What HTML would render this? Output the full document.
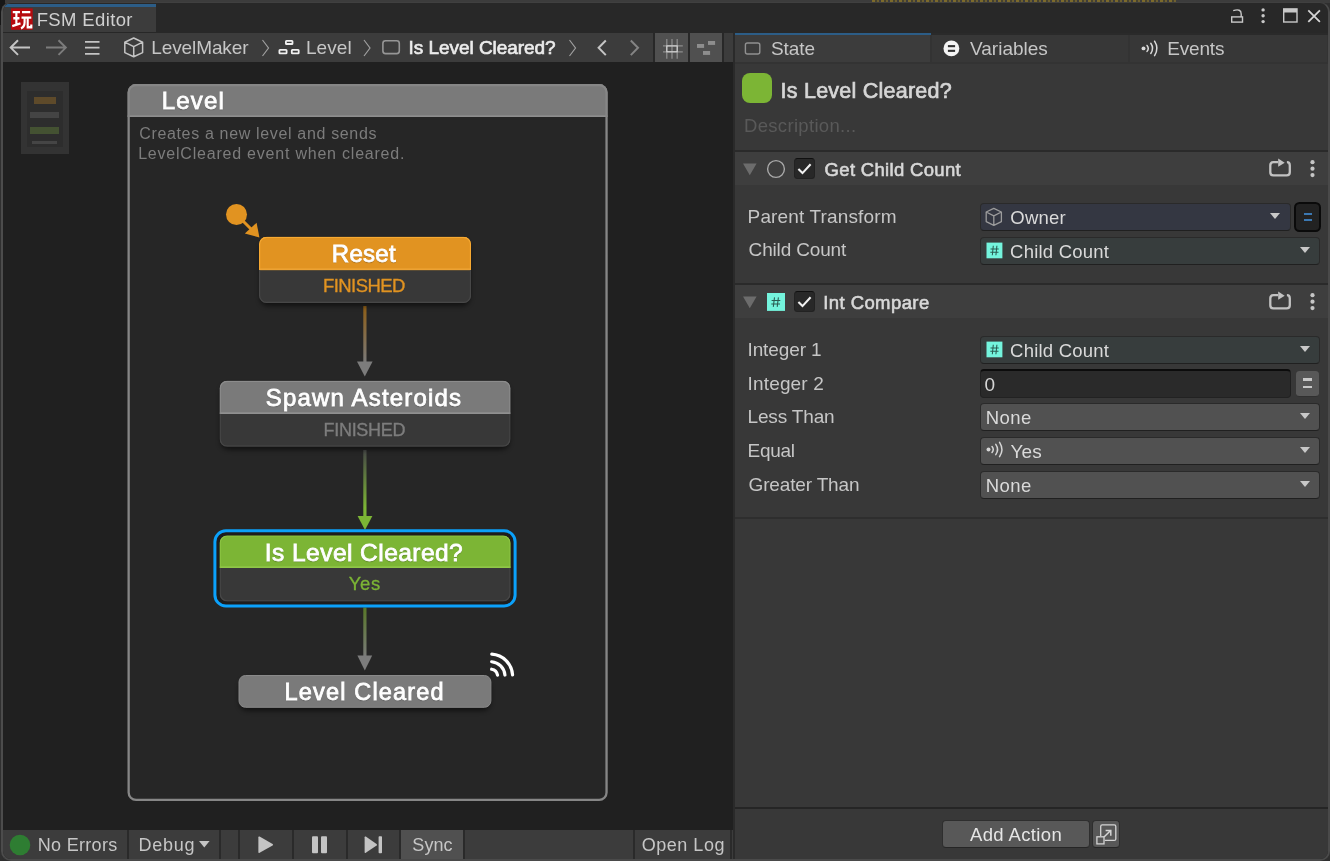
<!DOCTYPE html>
<html><head><meta charset="utf-8">
<style>
*{box-sizing:border-box;margin:0;padding:0}
html,body{width:1330px;height:861px;overflow:hidden;background:#2f2f2f;font-family:"Liberation Sans",sans-serif;}
.a{position:absolute}
#win{position:absolute;left:1px;top:2px;width:1329px;height:859px;border-style:solid;border-width:1px 2px 2px 2px;border-color:#404040 #4a4a4a #4a4a4a #4c4c4c;border-radius:10px;background:#282828;overflow:hidden}
#root{position:absolute;left:-3px;top:-3px;width:1330px;height:861px}
.t{position:absolute;white-space:nowrap}
.bar{background:#3c3c3c}
.sep{position:absolute;top:830px;width:2px;height:29px;background:#2a2a2a}
svg{position:absolute;overflow:visible}
.dd{position:absolute;border-radius:4px;border:1px solid #2a2a2a;border-bottom-color:#202020}
.tri{position:absolute;width:0;height:0;border-left:5.5px solid transparent;border-right:5.5px solid transparent;border-top:6.5px solid #c8c8c8}
.cb{position:absolute;width:21px;height:21px;background:#282828;border:1px solid #222;border-top:1.5px solid #101010;border-radius:3.5px}
.hash{position:absolute;background:#70f3dc}
</style></head><body>
<div class="a" style="left:0;top:0;width:2px;height:861px;background:#303030"></div><div class="a" style="left:0;top:0;width:2px;height:25px;background:#171717"></div><div class="a" style="left:0;top:0;width:1330px;height:3px;background:#3c3c3c"></div><div class="a" style="left:0;top:0;width:5px;height:6px;background:#171717"></div>
<div class="a" style="left:872px;top:0;width:306px;height:2px;background:repeating-linear-gradient(90deg,#7c6a2c 0 3px,#46422f 3px 5px,#6e6030 5px 7px,#3c3c3c 7px 9px)"></div>
<div id="win"><div id="root">
<!-- ================= LEFT PANEL ================= -->
<div class="a bar" style="left:3px;top:4px;width:153px;height:29px"></div>
<div class="a" style="left:3px;top:4px;width:153px;height:3px;background:#2c5d87"></div>
<div class="a" style="left:3px;top:32px;width:153px;height:1px;background:#272727"></div>
<!-- playmaker icon -->
<svg style="left:0;top:0" width="60" height="40"><rect x="11" y="8.4" width="21.7" height="21.4" fill="#b60a0e"/>
<g transform="translate(10.7,7.6) scale(1.03,1.12)" fill="none" stroke="#fff" stroke-width="2.1">
<path d="M2 4H9M5.5 4V15M2.5 9.5H8.5M1.5 16.5L9.5 14"/><path d="M11 4H19M10.5 9H20M13.5 9V13Q13.5 17 10 18.5M16.5 9V17.5H20V15"/>
</g></svg>
<!-- toolbar -->
<div class="a bar" style="left:3px;top:33px;width:650px;height:29px"></div>
<div class="a" style="left:655px;top:33px;width:33px;height:29px;background:#505050"></div>
<div class="a" style="left:690px;top:33px;width:32px;height:29px;background:#505050"></div>
<div class="a bar" style="left:724px;top:33px;width:9px;height:29px"></div>
<!-- back / fwd arrows -->
<svg style="left:0;top:0" width="733" height="62" fill="none" stroke-linecap="butt" stroke-linejoin="miter">
<path d="M30 47.6H11.5M18 40.3L10.7 47.6L18 54.9" stroke="#c4c4c4" stroke-width="2"/>
<path d="M46 47.6H65M58.5 40.3L65.8 47.6L58.5 54.9" stroke="#7c7c7c" stroke-width="2"/>
<path d="M85 41.8H99.5M85 47.7H99.5M85 53.8H99.5" stroke="#c4c4c4" stroke-width="1.7"/>
<!-- cube -->
<path d="M133.7 38L142.6 42.2V52.6L133.7 56.8L124.8 52.6V42.2ZM124.8 42.2L133.7 46.6L142.6 42.2M133.7 46.6V56.8" stroke="#c4c4c4" stroke-width="1.5" stroke-linejoin="round"/>
<!-- chevrons -->
<path d="M262.5 40L268.5 48L262.5 56" stroke="#a0a0a0" stroke-width="1.2"/>
<path d="M364 40L370 48L364 56" stroke="#a0a0a0" stroke-width="1.2"/>
<path d="M569.5 40L575.5 48L569.5 56" stroke="#a0a0a0" stroke-width="1.2"/>
<!-- fsm icon -->
<rect x="285.9" y="40.9" width="6.6" height="3.1" rx="0.6" stroke="#f0f0f0" stroke-width="1.8"/>
<rect x="279.4" y="49.9" width="7.2" height="3.4" rx="0.6" stroke="#f0f0f0" stroke-width="1.8"/>
<rect x="291.8" y="49.9" width="6.9" height="3.4" rx="0.6" stroke="#f0f0f0" stroke-width="1.8"/>
<!-- state icon -->
<rect x="382.9" y="40.8" width="16.4" height="12.8" rx="2.6" stroke="#969696" stroke-width="1.6"/>
<!-- < > -->
<path d="M605.8 40.5L598.6 47.8L605.8 55.1" stroke="#c4c4c4" stroke-width="2"/>
<path d="M630.8 40.5L638 47.8L630.8 55.1" stroke="#848484" stroke-width="2"/>
<!-- grid icon -->
<path d="M666.8 39V58.8M672 39V58.8M677.2 39V58.8M663 45.9H682.8M663 51.8H682.8" stroke="#8c8c8c" stroke-width="1.3"/>
<rect x="666.8" y="45.9" width="10.4" height="5.9" stroke="#d8d8d8" stroke-width="1.1"/>
<!-- minimap icon -->
<rect x="697" y="44" width="7.1" height="3.9" fill="#8e8e8e" stroke="none"/>
<rect x="708" y="41" width="7.1" height="3.9" fill="#8e8e8e" stroke="none"/>
<rect x="703" y="51" width="7.1" height="3.9" fill="#8e8e8e" stroke="none"/>
</svg>
<!-- graph bg -->
<div class="a" style="left:3px;top:62px;width:730px;height:768px;background:#202020"></div>
<!-- minimap thumbnail -->
<div class="a" style="left:21px;top:82px;width:48px;height:72px;background:#333333"></div>
<div class="a" style="left:27px;top:91px;width:36px;height:56.3px;background:#2d2d2d"></div>
<div class="a" style="left:34px;top:97px;width:21.5px;height:6.8px;background:#5e4a2a"></div>
<div class="a" style="left:30px;top:112px;width:29px;height:5.7px;background:#444444"></div>
<div class="a" style="left:30px;top:127px;width:29px;height:6.9px;background:#445232"></div>
<div class="a" style="left:32px;top:141px;width:25.4px;height:3.2px;background:#454545"></div>
<!-- group -->
<svg style="left:0;top:0" width="733" height="830">
<defs><clipPath id="gc"><rect x="127.5" y="83.9" width="480.2" height="717.2" rx="8.5"/></clipPath></defs>
<g clip-path="url(#gc)">
<rect x="127.3" y="83.7" width="480.4" height="717.4" fill="#262626"/>
<rect x="127.3" y="83.7" width="480.4" height="33.3" fill="#7a7a7a"/>
<rect x="127.3" y="115.3" width="480.4" height="1.7" fill="#8e8e8e"/>
<rect x="127.3" y="83.7" width="480.4" height="1.2" fill="#8a8a8a"/>
</g>
<rect x="128.65" y="85.05" width="477.9" height="714.9" rx="7.4" fill="none" stroke="#868686" stroke-width="2.3"/>
</svg>
<!-- edges -->
<svg style="left:0;top:0" width="733" height="830">
<defs>
<linearGradient id="g1" x1="0" y1="0" x2="0" y2="1"><stop offset="0" stop-color="#8e5e16"/><stop offset="1" stop-color="#7a7a7a"/></linearGradient>
<linearGradient id="g2" x1="0" y1="0" x2="0" y2="1"><stop offset="0" stop-color="#464846"/><stop offset="0.85" stop-color="#7cb535"/><stop offset="1" stop-color="#7cb535"/></linearGradient>
<linearGradient id="g3" x1="0" y1="0" x2="0" y2="1"><stop offset="0" stop-color="#587828"/><stop offset="1" stop-color="#7a7a7a"/></linearGradient>
</defs>
<rect x="363.3" y="306" width="3.2" height="57" fill="url(#g1)"/>
<path d="M357 361.5H372.6L364.8 376.5Z" fill="#7c7c7c"/>
<rect x="363.3" y="450" width="3.2" height="68" fill="url(#g2)"/>
<path d="M357.6 516H372.4L365 530Z" fill="#7cb535"/>
<rect x="363.3" y="607.5" width="3.2" height="49.5" fill="url(#g3)"/>
<path d="M357.4 655.5H372.2L364.8 670.5Z" fill="#7c7c7c"/>
<!-- start marker -->
<circle cx="236.5" cy="214.5" r="10.5" fill="#e19321"/>
<path d="M240 218L252 230" stroke="#e19321" stroke-width="3"/>
<path d="M256.6 222.8L259.4 237.4L244.8 233.4Z" fill="#e19321"/>
<!-- wifi -->
<path d="M491.65 669.21A7.2 7.2 0 0 1 497.49 675.05M491.67 661.76A14.6 14.6 0 0 1 504.94 675.03M491.76 654.14A22.2 22.2 0 0 1 512.56 674.94" fill="none" stroke="#ffffff" stroke-width="3.2" stroke-linecap="round"/>
</svg>
<!-- nodes -->
<svg style="left:0;top:0" width="733" height="830">
<defs><filter id="sh" x="-10%" y="-20%" width="120%" height="150%"><feGaussianBlur stdDeviation="2.6"/></filter>
<clipPath id="n1"><rect x="259.0" y="236.8" width="212.1" height="66.2" rx="7.6"/></clipPath>
<clipPath id="n1h"><rect x="259.0" y="236.8" width="212.1" height="33.3"/></clipPath>
<clipPath id="n1b"><rect x="259.0" y="270.1" width="212.1" height="32.9"/></clipPath>
<clipPath id="n2"><rect x="219.6" y="380.7" width="290.9" height="66.0" rx="7.6"/></clipPath>
<clipPath id="n2h"><rect x="219.6" y="380.7" width="290.9" height="33.3"/></clipPath>
<clipPath id="n2b"><rect x="219.6" y="414.0" width="290.9" height="32.7"/></clipPath>
<clipPath id="n3"><rect x="219.6" y="535.4" width="291.0" height="66.0" rx="7.6"/></clipPath>
<clipPath id="n3h"><rect x="219.6" y="535.4" width="291.0" height="32.6"/></clipPath>
<clipPath id="n3b"><rect x="219.6" y="568.0" width="291.0" height="33.4"/></clipPath>
</defs>
<rect x="260.0" y="240.8" width="210.1" height="65.2" rx="8" fill="#000" opacity="0.55" filter="url(#sh)"/>
<g clip-path="url(#n1)"><rect x="259.0" y="236.8" width="212.1" height="66.2" fill="#383838"/><rect x="259.0" y="236.8" width="212.1" height="33.3" fill="#e19321"/><rect x="259.0" y="268.4" width="212.1" height="1.7" fill="#eda233"/></g>
<rect x="259.6" y="237.4" width="210.9" height="65.0" rx="7" fill="none" stroke="#f7a932" stroke-width="1.2" clip-path="url(#n1h)"/>
<rect x="259.6" y="237.4" width="210.9" height="65.0" rx="7" fill="none" stroke="#474747" stroke-width="1.2" clip-path="url(#n1b)"/>
<rect x="220.6" y="384.7" width="288.9" height="65.0" rx="8" fill="#000" opacity="0.55" filter="url(#sh)"/>
<g clip-path="url(#n2)"><rect x="219.6" y="380.7" width="290.9" height="66.0" fill="#383838"/><rect x="219.6" y="380.7" width="290.9" height="33.3" fill="#7a7a7a"/><rect x="219.6" y="412.3" width="290.9" height="1.7" fill="#909090"/></g>
<rect x="220.2" y="381.3" width="289.7" height="64.8" rx="7" fill="none" stroke="#8c8c8c" stroke-width="1.2" clip-path="url(#n2h)"/>
<rect x="220.2" y="381.3" width="289.7" height="64.8" rx="7" fill="none" stroke="#474747" stroke-width="1.2" clip-path="url(#n2b)"/>
<rect x="214.9" y="530.8" width="300.2" height="75.2" rx="11" fill="#1d1d1d" stroke="#0ba1fb" stroke-width="3"/>
<g clip-path="url(#n3)"><rect x="219.6" y="535.4" width="291.0" height="66.0" fill="#383838"/><rect x="219.6" y="535.4" width="291.0" height="32.6" fill="#7cb535"/><rect x="219.6" y="566.3" width="291.0" height="1.7" fill="#8fc648"/></g>
<rect x="220.2" y="536.0" width="289.8" height="64.8" rx="7" fill="none" stroke="#8cc443" stroke-width="1.2" clip-path="url(#n3h)"/>
<rect x="220.2" y="536.0" width="289.8" height="64.8" rx="7" fill="none" stroke="#474747" stroke-width="1.2" clip-path="url(#n3b)"/>
<rect x="239.5" y="679.0" width="250.9" height="31.8" rx="8" fill="#000" opacity="0.55" filter="url(#sh)"/>
<rect x="239.0" y="675.5" width="251.9" height="31.8" rx="6.5" fill="#7a7a7a" stroke="#8a8a8a" stroke-width="1"/>
</svg>
<!-- bottom bar -->
<div class="a bar" style="left:3px;top:830px;width:727px;height:29px"></div>
<div class="a bar" style="left:732px;top:830px;width:1px;height:29px"></div>
<div class="a" style="left:401px;top:830px;width:62px;height:29px;background:#505050"></div>
<div class="sep" style="left:127px"></div><div class="sep" style="left:219px"></div><div class="sep" style="left:238px"></div>
<div class="sep" style="left:292px"></div><div class="sep" style="left:346px"></div><div class="sep" style="left:399px"></div>
<div class="sep" style="left:463px"></div><div class="sep" style="left:633px"></div><div class="sep" style="left:730px"></div>
<svg style="left:0;top:0" width="60" height="861"><circle cx="20" cy="845" r="10.3" fill="#2e7d32"/></svg>
<svg style="left:0;top:0" width="733" height="861">
<path d="M199 841H209.6L204.3 847.4Z" fill="#c4c4c4"/>
<path d="M258.4 837.2Q258.4 836 259.6 836.6L272.6 844Q273.6 844.7 272.6 845.4L259.6 852.8Q258.4 853.4 258.4 852.2Z" fill="#c4c4c4"/>
<rect x="312" y="836.2" width="6" height="17" rx="1" fill="#c4c4c4"/><rect x="321" y="836.2" width="6" height="17" rx="1" fill="#c4c4c4"/>
<path d="M364.6 837.2Q364.6 836 365.8 836.6L376.6 844Q377.4 844.7 376.6 845.4L365.8 852.8Q364.6 853.4 364.6 852.2Z" fill="#c4c4c4"/>
<rect x="378.6" y="836.2" width="3.4" height="17" rx="0.8" fill="#c4c4c4"/>
</svg>
<!-- divider -->
<div class="a" style="left:733px;top:33px;width:2px;height:826px;background:#2a2a2a"></div>
<!-- ================= RIGHT PANEL ================= -->
<div class="a" style="left:735px;top:33px;width:593px;height:826px;background:#383838"></div>
<div class="a" style="left:735px;top:33px;width:593px;height:30.5px;background:#333333"></div>
<div class="a" style="left:931px;top:33px;width:397px;height:2px;background:#2a2a2a"></div>
<div class="a bar" style="left:735px;top:33px;width:195.3px;height:28.5px"></div>
<div class="a" style="left:735px;top:33px;width:196px;height:2px;background:#2c5d87"></div>
<div class="a" style="left:932px;top:35px;width:196px;height:26.5px;background:#373737"></div>
<div class="a" style="left:1130px;top:35px;width:197px;height:26.5px;background:#373737"></div>
<!-- window icons + tab icons -->
<svg style="left:0;top:0" width="1330" height="70" fill="none">
<rect x="745.4" y="43" width="14.4" height="11" rx="2" stroke="#909090" stroke-width="1.4"/>
<circle cx="951.4" cy="48.4" r="7.9" fill="#f4f4f4"/><rect x="947.9" y="45.1" width="7.2" height="2.1" fill="#303030"/><rect x="947.9" y="49.8" width="7.2" height="2.1" fill="#303030"/>
<circle cx="1143.5" cy="48.4" r="1.95" fill="#dadada"/><path d="M1147.02 45.44A4.6 4.6 0 0 1 1147.02 51.36M1150.79 43.30A8.9 8.9 0 0 1 1150.79 53.50M1154.57 41.21A13.2 13.2 0 0 1 1154.57 55.59" stroke="#dadada" stroke-width="1.5" stroke-linecap="round" fill="none"/>
<!-- lock -->
<rect x="1231.7" y="16.9" width="10.8" height="5.2" stroke="#c8c8c8" stroke-width="1.4"/>
<path d="M1233.2 10.6Q1241.2 8.2 1241.2 14V16.9" stroke="#c8c8c8" stroke-width="1.4"/>
<circle cx="1263.1" cy="9.9" r="1.7" fill="#c8c8c8"/><circle cx="1263.1" cy="15.7" r="1.7" fill="#c8c8c8"/><circle cx="1263.1" cy="21.6" r="1.7" fill="#c8c8c8"/>
<rect x="1283.7" y="8.9" width="13.3" height="13.1" stroke="#c8c8c8" stroke-width="1.4"/><rect x="1283.7" y="8.9" width="13.3" height="3.6" fill="#c8c8c8"/>
<path d="M1308.3 10.3L1319.9 21.9M1319.9 10.3L1308.3 21.9" stroke="#d4d4d4" stroke-width="1.8"/>
</svg>
<!-- state header -->
<div class="a" style="left:742px;top:73px;width:30px;height:30px;border-radius:8px;background:#7cb535"></div>
<!-- action 1 header -->
<div class="a" style="left:735px;top:150px;width:593px;height:2px;background:#2a2a2a"></div>
<div class="a" style="left:735px;top:152px;width:593px;height:33px;background:#3e3e3e"></div>
<div class="a" style="left:735px;top:283px;width:593px;height:2px;background:#2a2a2a"></div>
<div class="a" style="left:735px;top:285px;width:593px;height:33px;background:#3e3e3e"></div>
<div class="a" style="left:735px;top:517px;width:593px;height:2px;background:#2e2e2e"></div>
<div class="a" style="left:735px;top:807px;width:593px;height:2px;background:#252525"></div>
<div class="cb" style="left:794px;top:158px"></div>
<div class="cb" style="left:794px;top:291px"></div>
<svg style="left:0;top:0" width="1330" height="861" fill="none">
<path d="M743 163.4H756.6L749.8 175.2Z" fill="#6c6c6c"/>
<path d="M743 296.4H756.6L749.8 308.2Z" fill="#6c6c6c"/>
<circle cx="776" cy="169" r="8.4" stroke="#a8a8a8" stroke-width="1.4"/>
<path d="M798.4 169L802.5 173.1L810.6 164.3" stroke="#f0f0f0" stroke-width="2.1"/>
<path d="M798.4 302L802.5 306.1L810.6 297.3" stroke="#f0f0f0" stroke-width="2.1"/>
<!-- loop icons -->
<path d="M1278 162.2H1273.5Q1270.3 162.2 1270.3 165.39999999999998V172.20000000000002Q1270.3 175.4 1273.5 175.4H1286.6Q1289.8 175.4 1289.8 172.20000000000002V165.39999999999998Q1289.8 162.2 1286.9 162.2" stroke="#c2c2c2" stroke-width="2.3"/><path d="M1278.2 158.6L1284.7 162.7L1278.2 166.8Z" fill="#c2c2c2"/><path d="M1278 295.2H1273.5Q1270.3 295.2 1270.3 298.4V305.2Q1270.3 308.4 1273.5 308.4H1286.6Q1289.8 308.4 1289.8 305.2V298.4Q1289.8 295.2 1286.9 295.2" stroke="#c2c2c2" stroke-width="2.3"/><path d="M1278.2 291.6L1284.7 295.7L1278.2 299.8Z" fill="#c2c2c2"/><circle cx="1312.5" cy="162.2" r="2.1" fill="#c6c6c6"/><circle cx="1312.5" cy="168.65" r="2.1" fill="#c6c6c6"/><circle cx="1312.5" cy="175.1" r="2.1" fill="#c6c6c6"/><circle cx="1312.5" cy="295.2" r="2.1" fill="#c6c6c6"/><circle cx="1312.5" cy="301.65" r="2.1" fill="#c6c6c6"/><circle cx="1312.5" cy="308.1" r="2.1" fill="#c6c6c6"/>
</svg>
<!-- "#" glyph on header box -->
<!-- fields -->
<div class="dd" style="left:980px;top:203px;width:310.5px;height:28px;background:#343742"></div>
<div class="a" style="left:1294px;top:202px;width:27px;height:29.5px;background:#222;border:2.5px solid #0a0a0a;border-radius:5.5px"></div>
<div class="a" style="left:1304px;top:212.8px;width:8.3px;height:2.2px;background:#3b78b2"></div>
<div class="a" style="left:1304px;top:218.6px;width:8.3px;height:2.3px;background:#3b78b2"></div>
<div class="dd" style="left:980px;top:237px;width:340px;height:28px;background:#373d3d"></div>
<div class="dd" style="left:980px;top:336px;width:340px;height:28px;background:#373d3d"></div>
<div class="dd" style="left:980px;top:369px;width:310.5px;height:28.5px;background:#2a2a2a;border-color:#0c0c0c #202020 #222222 #202020;border-top-width:2px"></div>
<div class="a" style="left:1296px;top:371px;width:23px;height:25.5px;background:#585858;border-radius:3.5px;border-bottom:1px solid #303030"></div>
<div class="a" style="left:1303px;top:378.4px;width:9.4px;height:2.2px;background:#c8c8c8"></div>
<div class="a" style="left:1303px;top:385.8px;width:9.4px;height:2.2px;background:#c8c8c8"></div>
<div class="dd" style="left:980px;top:403px;width:340px;height:28px;background:#515151"></div>
<div class="dd" style="left:980px;top:437px;width:340px;height:28px;background:#515151"></div>
<div class="dd" style="left:980px;top:471px;width:340px;height:28px;background:#515151"></div>
<div class="tri" style="left:1270px;top:213px"></div>
<div class="tri" style="left:1300px;top:247px"></div>
<div class="tri" style="left:1300px;top:346px"></div>
<div class="tri" style="left:1300px;top:413px"></div>
<div class="tri" style="left:1300px;top:447px"></div>
<div class="tri" style="left:1300px;top:481px"></div>
<svg style="left:0;top:0" width="1330" height="861" fill="none">
<!-- owner cube -->
<path d="M993.8 208.4L1001.4 212V221.6L993.8 225.4L986.2 221.6V212ZM986.2 212L993.8 215.8L1001.4 212M993.8 215.8V225.4" stroke="#9c9c9c" stroke-width="1.3" stroke-linejoin="round"/>
<!-- hash glyphs -->
<rect x="767" y="293" width="18" height="17.9" fill="#74f4dd"/><rect x="986.5" y="242.6" width="15.9" height="15.7" fill="#74f4dd"/><rect x="986.5" y="341.6" width="15.9" height="15.7" fill="#74f4dd"/>
<g stroke="#2a5c52" stroke-width="1.05">
<path d="M774.5 297.4L773.3 306.9M778.4 297.4L777.2 306.9M771.6 300.5H780.3M771.3 303.9H780"/>
<path d="M993.3 245.7L992.3 255.3M996.9 245.7L995.9 255.3M990.5 248.9H998.7M990.3 252.2H998.5"/>
<path d="M993.3 344.7L992.3 354.3M996.9 344.7L995.9 354.3M990.5 347.9H998.7M990.3 351.2H998.5"/>
</g>
<!-- events icon in Equal -->
<circle cx="988.5" cy="449.5" r="1.95" fill="#d6d6d6"/><path d="M992.02 446.54A4.6 4.6 0 0 1 992.02 452.46M995.79 444.40A8.9 8.9 0 0 1 995.79 454.60M999.57 442.31A13.2 13.2 0 0 1 999.57 456.69" stroke="#d6d6d6" stroke-width="1.5" stroke-linecap="round" fill="none"/>
<!-- add action icon -->
</svg>
<div class="a" style="left:942px;top:820px;width:148px;height:28px;background:#585858;border:1px solid #2e2e2e;border-bottom-color:#262626;border-radius:4px"></div>
<div class="a" style="left:1092px;top:820px;width:28px;height:28px;background:#585858;border:1px solid #2e2e2e;border-bottom-color:#262626;border-radius:4px"></div>
<svg style="left:0;top:0" width="1330" height="861" fill="none" stroke="#d4d4d4" stroke-width="1.3">
<path d="M1100.7 836V826.4Q1100.7 824.9 1102.2 824.9H1114.3Q1115.8 824.9 1115.8 826.4V838.9Q1115.8 840.4 1114.3 840.4H1104.8"/>
<rect x="1096.9" y="836.8" width="7.1" height="7.1" fill="#585858"/>
<path d="M1104 837L1110.4 830.7M1105.6 830.4H1110.8V835.8" stroke-width="1.5"/>
</svg>
<div id="tx" style="position:absolute;left:0;top:0;width:1330px;height:861px;will-change:transform">
<div class="t" style="left:36.70px;top:11.24px;font-size:18.5px;line-height:18.5px;font-weight:400;letter-spacing:0.360px;color:#d0d0d0;">FSM Editor</div>
<div class="t" style="left:151.30px;top:37.52px;font-size:19.0px;line-height:19.0px;font-weight:400;letter-spacing:-0.109px;color:#c6c6c6;">LevelMaker</div>
<div class="t" style="left:306.00px;top:37.52px;font-size:19.0px;line-height:19.0px;font-weight:400;letter-spacing:0.050px;color:#c6c6c6;">Level</div>
<div class="t" style="left:408.62px;top:37.52px;font-size:19.0px;line-height:19.0px;font-weight:400;letter-spacing:-0.053px;color:#ececec;-webkit-text-stroke:0.65px #ececec;">Is Level Cleared?</div>
<div class="t" style="left:161.80px;top:88.68px;font-size:24.0px;line-height:24.0px;font-weight:400;letter-spacing:1.139px;color:#ffffff;text-shadow:0 1px 1px rgba(0,0,0,.45);-webkit-text-stroke:0.8px #fff;">Level</div>
<div class="t" style="left:139.20px;top:126.36px;font-size:16px;line-height:16px;font-weight:400;letter-spacing:0.661px;color:#7c7c7c;">Creates a new level and sends</div>
<div class="t" style="left:138.20px;top:146.36px;font-size:16px;line-height:16px;font-weight:400;letter-spacing:0.784px;color:#7c7c7c;">LevelCleared event when cleared.</div>
<div class="t" style="left:331.80px;top:241.88px;font-size:24.0px;line-height:24.0px;font-weight:400;letter-spacing:0.293px;color:#ffffff;text-shadow:0 1px 1px rgba(0,0,0,.35);-webkit-text-stroke:0.8px #fff;">Reset</div>
<div class="t" style="left:322.88px;top:277.44px;font-size:18.5px;line-height:18.5px;font-weight:400;letter-spacing:-0.547px;color:#e19321;-webkit-text-stroke:0.35px #e19321;">FINISHED</div>
<div class="t" style="left:265.80px;top:386.28px;font-size:24.0px;line-height:24.0px;font-weight:400;letter-spacing:1.172px;color:#ffffff;text-shadow:0 1px 1px rgba(0,0,0,.35);-webkit-text-stroke:0.8px #fff;">Spawn Asteroids</div>
<div class="t" style="left:323.57px;top:420.56px;font-size:18.0px;line-height:18.0px;font-weight:400;letter-spacing:-0.308px;color:#7d7d7d;-webkit-text-stroke:0.35px #7d7d7d;">FINISHED</div>
<div class="t" style="left:264.80px;top:540.96px;font-size:24.5px;line-height:24.5px;font-weight:400;letter-spacing:0.454px;color:#ffffff;text-shadow:0 1px 1px rgba(0,0,0,.35);-webkit-text-stroke:0.8px #fff;">Is Level Cleared?</div>
<div class="t" style="left:348.75px;top:574.74px;font-size:18.5px;line-height:18.5px;font-weight:400;letter-spacing:0.685px;color:#7cb535;-webkit-text-stroke:0.3px #7cb535;">Yes</div>
<div class="t" style="left:284.60px;top:680.81px;font-size:23.5px;line-height:23.5px;font-weight:400;letter-spacing:1.172px;color:#ffffff;text-shadow:0 1px 1px rgba(0,0,0,.35);-webkit-text-stroke:0.8px #fff;">Level Cleared</div>
<div class="t" style="left:37.80px;top:835.56px;font-size:18.0px;line-height:18.0px;font-weight:400;letter-spacing:0.299px;color:#c6c6c6;">No Errors</div>
<div class="t" style="left:138.40px;top:835.56px;font-size:18.0px;line-height:18.0px;font-weight:400;letter-spacing:0.742px;color:#c6c6c6;">Debug</div>
<div class="t" style="left:412.30px;top:835.56px;font-size:18.0px;line-height:18.0px;font-weight:400;letter-spacing:0.094px;color:#c6c6c6;">Sync</div>
<div class="t" style="left:641.80px;top:835.56px;font-size:18.0px;line-height:18.0px;font-weight:400;letter-spacing:0.506px;color:#c6c6c6;">Open Log</div>
<div class="t" style="left:771.00px;top:38.52px;font-size:19.0px;line-height:19.0px;font-weight:400;letter-spacing:-0.099px;color:#c6c6c6;">State</div>
<div class="t" style="left:970.00px;top:38.52px;font-size:19.0px;line-height:19.0px;font-weight:400;letter-spacing:0.000px;color:#c6c6c6;">Variables</div>
<div class="t" style="left:1167.20px;top:38.52px;font-size:19.0px;line-height:19.0px;font-weight:400;letter-spacing:-0.157px;color:#c6c6c6;">Events</div>
<div class="t" style="left:780.55px;top:80.80px;font-size:21.5px;line-height:21.5px;font-weight:400;letter-spacing:0.234px;color:#d6d6d6;-webkit-text-stroke:0.7px #d6d6d6;">Is Level Cleared?</div>
<div class="t" style="left:744.00px;top:116.94px;font-size:18.5px;line-height:18.5px;font-weight:400;letter-spacing:0.322px;color:#595959;">Description...</div>
<div class="t" style="left:824.60px;top:160.94px;font-size:18.5px;line-height:18.5px;font-weight:400;letter-spacing:0.316px;color:#d8d8d8;-webkit-text-stroke:0.6px #d8d8d8;">Get Child Count</div>
<div class="t" style="left:747.60px;top:206.52px;font-size:19.0px;line-height:19.0px;font-weight:400;letter-spacing:0.140px;color:#c6c6c6;">Parent Transform</div>
<div class="t" style="left:748.60px;top:240.22px;font-size:19.0px;line-height:19.0px;font-weight:400;letter-spacing:-0.160px;color:#c6c6c6;">Child Count</div>
<div class="t" style="left:1010.30px;top:208.94px;font-size:18.5px;line-height:18.5px;font-weight:400;letter-spacing:0.193px;color:#dadada;">Owner</div>
<div class="t" style="left:1010.10px;top:242.94px;font-size:18.5px;line-height:18.5px;font-weight:400;letter-spacing:0.218px;color:#dadada;">Child Count</div>
<div class="t" style="left:823.30px;top:293.94px;font-size:18.5px;line-height:18.5px;font-weight:400;letter-spacing:0.409px;color:#d8d8d8;-webkit-text-stroke:0.6px #d8d8d8;">Int Compare</div>
<div class="t" style="left:747.50px;top:339.72px;font-size:19.0px;line-height:19.0px;font-weight:400;letter-spacing:-0.116px;color:#c6c6c6;">Integer 1</div>
<div class="t" style="left:747.50px;top:373.52px;font-size:19.0px;line-height:19.0px;font-weight:400;letter-spacing:0.171px;color:#c6c6c6;">Integer 2</div>
<div class="t" style="left:747.50px;top:407.12px;font-size:19.0px;line-height:19.0px;font-weight:400;letter-spacing:-0.157px;color:#c6c6c6;">Less Than</div>
<div class="t" style="left:747.50px;top:440.82px;font-size:19.0px;line-height:19.0px;font-weight:400;letter-spacing:-0.268px;color:#c6c6c6;">Equal</div>
<div class="t" style="left:748.50px;top:474.52px;font-size:19.0px;line-height:19.0px;font-weight:400;letter-spacing:-0.148px;color:#c6c6c6;">Greater Than</div>
<div class="t" style="left:1010.10px;top:342.14px;font-size:18.5px;line-height:18.5px;font-weight:400;letter-spacing:0.218px;color:#dadada;">Child Count</div>
<div class="t" style="left:984.60px;top:375.12px;font-size:19.0px;line-height:19.0px;font-weight:400;letter-spacing:0.000px;color:#d6d6d6;">0</div>
<div class="t" style="left:985.70px;top:409.04px;font-size:18.5px;line-height:18.5px;font-weight:400;letter-spacing:0.421px;color:#dadada;">None</div>
<div class="t" style="left:1010.40px;top:441.92px;font-size:19.0px;line-height:19.0px;font-weight:400;letter-spacing:0.202px;color:#dadada;">Yes</div>
<div class="t" style="left:985.70px;top:476.84px;font-size:18.5px;line-height:18.5px;font-weight:400;letter-spacing:0.421px;color:#dadada;">None</div>
<div class="t" style="left:970.00px;top:825.94px;font-size:18.5px;line-height:18.5px;font-weight:400;letter-spacing:0.357px;color:#e6e6e6;">Add Action</div>
</div>
</div></div>
</body></html>
